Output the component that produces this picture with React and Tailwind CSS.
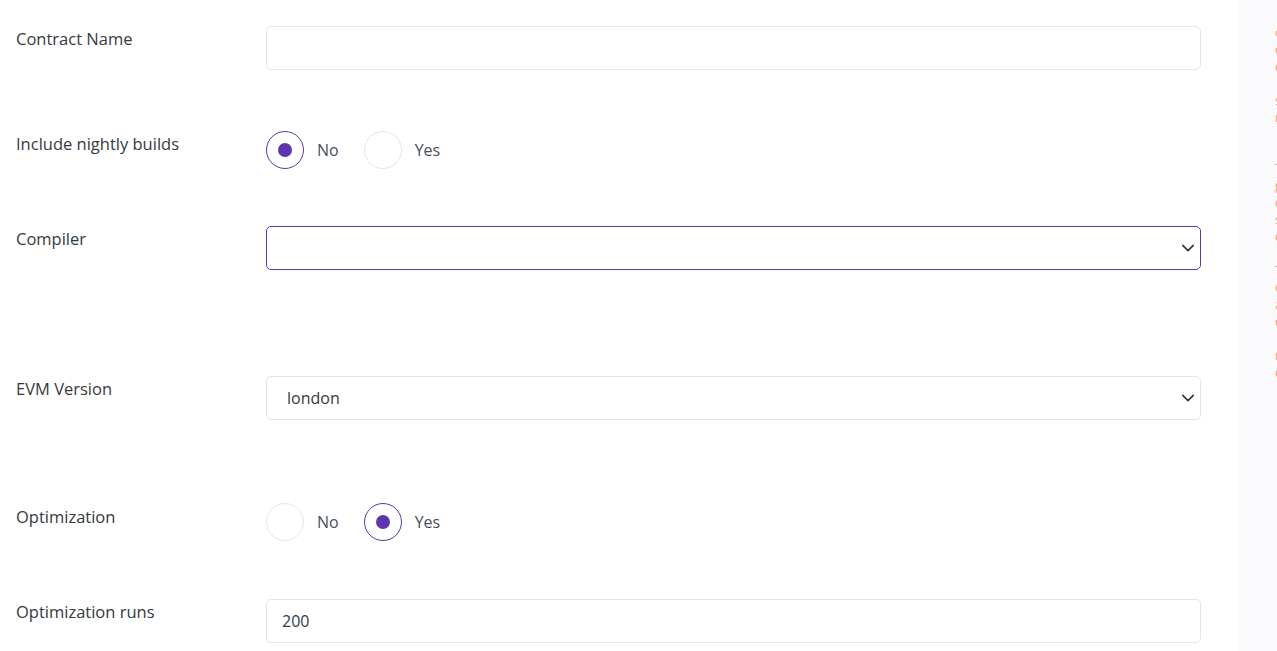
import React from 'react'

const font = { fontFamily: '"Open Sans", "Noto Sans", sans-serif' }

const Chevron = () => (
  <svg width="14" height="14" viewBox="0 0 16 16" fill="none" className="text-[#343a40]">
    <path d="M2 5l6 6 6-6" stroke="currentColor" strokeWidth="2" strokeLinecap="round" strokeLinejoin="round" />
  </svg>
)

const Radio = ({ checked, label }) => (
  <label className="flex items-center gap-[13px]">
    <span
      className={
        'w-[38px] h-[38px] rounded-full border flex items-center justify-center ' +
        (checked ? 'border-[#5e35b1]' : 'border-[#e4e4ee]')
      }
    >
      {checked && <span className="w-[14px] h-[14px] rounded-full bg-[#5e35b1]" />}
    </span>
    <span className="text-[16px] text-[#495057]">{label}</span>
  </label>
)

const Row = ({ label, top, labelPad, children }) => (
  <div className={'flex ' + top}>
    <div className={'w-[250px] shrink-0 text-[16.5px] text-[#343a40] ' + labelPad}>{label}</div>
    <div className="w-[935px]">{children}</div>
  </div>
)

const notes = [
  'o', 'o', 'o', '', 's', 'n', '', '', 'T', 'g', 'o', 's', 'c', '', 'T', 'o', 'a', 'c', '', 'n', 'o',
]

export default function App() {
  return (
    <div className="flex h-[651px] bg-white overflow-hidden" style={font}>
      {/* Form */}
      <div className="w-[1238px] shrink-0 pl-[16px]">
        <Row label="Contract Name" top="mt-[26px]" labelPad="pt-[1px]">
          <input className="w-full h-[44px] border border-[#e4e4ee] rounded-[5px] px-4 outline-none" />
        </Row>

        <Row label="Include nightly builds" top="mt-[61px]" labelPad="pt-[1px]">
          <div className="flex gap-[25px]">
            <Radio checked label="No" />
            <Radio label="Yes" />
          </div>
        </Row>

        <Row label="Compiler" top="mt-[57px]" labelPad="pt-[1px]">
          <div className="w-full h-[44px] border border-[#5e35b1] rounded-[5px] flex items-center justify-end pr-[5px]">
            <Chevron />
          </div>
        </Row>

        <Row label="EVM Version" top="mt-[106px]" labelPad="pt-[1px]">
          <div className="w-full h-[44px] border border-[#e4e4ee] rounded-[5px] flex items-center justify-between pl-[20px] pr-[5px]">
            <span className="text-[16px] text-[#343a40]">london</span>
            <Chevron />
          </div>
        </Row>

        <Row label="Optimization" top="mt-[83px]" labelPad="pt-[2px]">
          <div className="flex gap-[25px]">
            <Radio label="No" />
            <Radio checked label="Yes" />
          </div>
        </Row>

        <Row label="Optimization runs" top="mt-[58px]" labelPad="pt-[1px]">
          <div className="w-full h-[44px] border border-[#e4e4ee] rounded-[5px] flex items-center pl-[15px]">
            <span className="text-[16px] text-[#343a40]">200</span>
          </div>
        </Row>
      </div>

      {/* Side panel */}
      <div className="flex-1 bg-[#fafafc] pl-[37px] pt-[24px] overflow-hidden">
        <div className="flex flex-col text-[13px] leading-[17px] text-[#f0a070]">
          {notes.map((n, i) => (
            <span key={i} className="h-[17px] whitespace-nowrap">{n || '\u00a0'}</span>
          ))}
        </div>
      </div>
    </div>
  )
}
